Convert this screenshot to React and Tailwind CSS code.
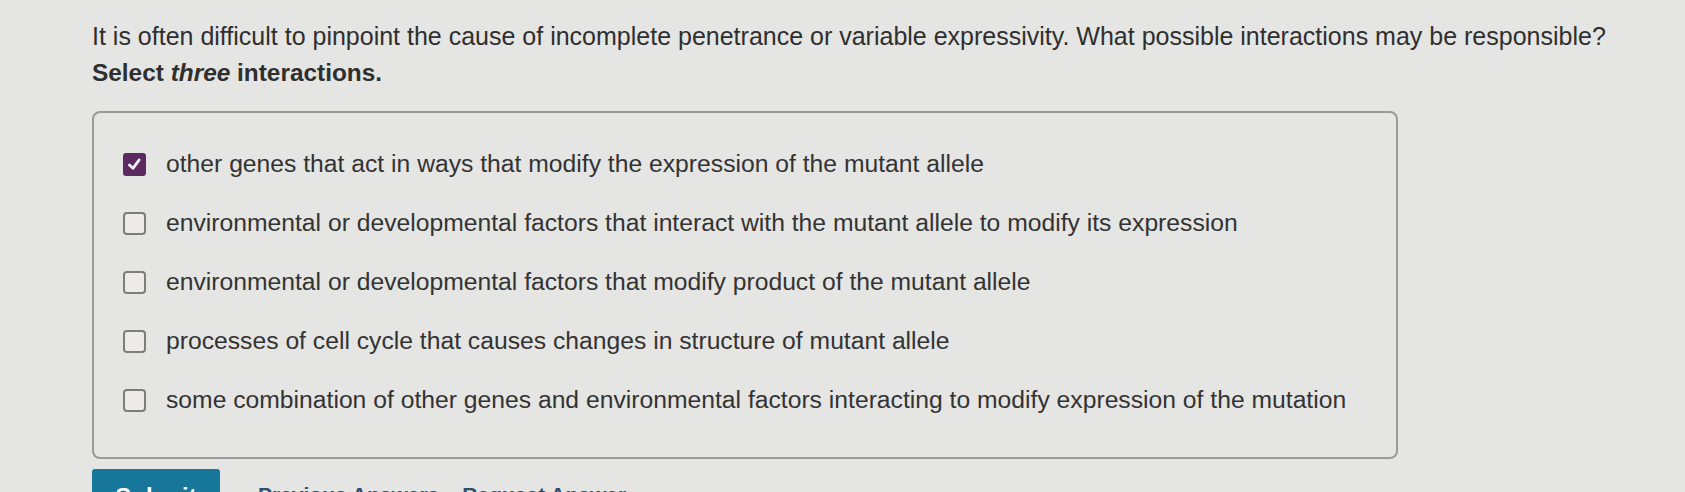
const options = [
  { text: 'other genes that act in ways that modify the expression of the mutant allele', checked: true },
  { text: 'environmental or developmental factors that interact with the mutant allele to modify its expression', checked: false },
  { text: 'environmental or developmental factors that modify product of the mutant allele', checked: false },
  { text: 'processes of cell cycle that causes changes in structure of mutant allele', checked: false },
  { text: 'some combination of other genes and environmental factors interacting to modify expression of the mutation', checked: false },
]

function Box({ checked }) {
  if (checked) {
    return (
      <span className="flex h-[23px] w-[23px] shrink-0 items-center justify-center rounded-[3px] bg-[#5b2a60]">
        <svg viewBox="0 0 20 20" className="h-[17px] w-[17px]">
          <path d="M4 10.5 L8.2 14.5 L15.5 4.5" fill="none" stroke="#f4eef6" strokeWidth="3.2" strokeLinecap="round" strokeLinejoin="round" />
        </svg>
      </span>
    )
  }
  return <span className="h-[23px] w-[23px] shrink-0 rounded-[4px] border-2 border-[#7d7d7d] bg-[#ecebea]" />
}

export default function App() {
  return (
    <div className="h-[492px] w-[1685px] overflow-hidden bg-[#e5e5e3] font-['Liberation_Sans',Arial,sans-serif] text-[#2f2f2f]">
      <div className="pl-[92px] pt-[21px]">
        <p className="text-[25px] leading-[30px]">
          It is often difficult to pinpoint the cause of incomplete penetrance or variable expressivity. What possible interactions may be responsible?
        </p>
        <p className="mt-[7px] text-[24.4px] font-bold leading-[30px]">
          Select <em>three</em> interactions.
        </p>

        <div className="mt-[23px] flex h-[348px] w-[1306px] flex-col gap-[27px] rounded-[8px] border-2 border-[#9a9a98] pl-[29px] pt-[35px]">
          {options.map((o, i) => (
            <label key={i} className="flex h-[32px] items-center gap-[20px]">
              <Box checked={o.checked} />
              <span className="text-[24.7px] leading-[32px] text-[#333]">{o.text}</span>
            </label>
          ))}
        </div>

        <div className="mt-[10px] flex items-start">
          <button className="h-[40px] w-[128px] rounded-[3px] bg-[#16779a] pt-[16px] text-[24px] font-bold leading-[24px] text-white">
            Submit
          </button>
          <span className="ml-[38px] pt-[14px] text-[21px] leading-[24px] font-bold text-[#2f4e6e]">Previous Answers</span>
          <span className="ml-[23px] pt-[14px] text-[21px] leading-[24px] font-bold text-[#2f4e6e]">Request Answer</span>
        </div>
      </div>
    </div>
  )
}
